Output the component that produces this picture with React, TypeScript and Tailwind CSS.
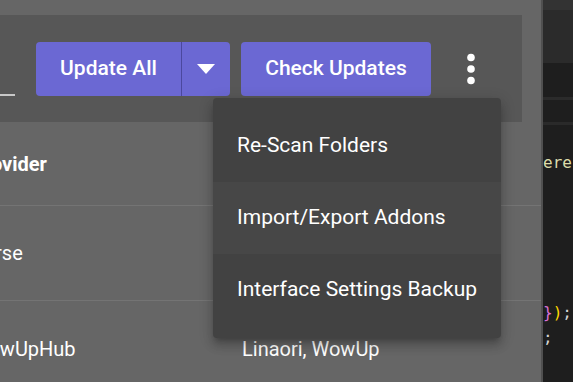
import React from "react";

const FONT = { fontFamily: "Roboto, 'Noto Sans', sans-serif" };

const ROWS = [
  { name: "Provider", author: "", head: true },
  { name: "Curse", author: "", head: false },
  { name: "WowUpHub", author: "Linaori, WowUp", head: false },
];

const MENU = ["Re-Scan Folders", "Import/Export Addons", "Interface Settings Backup"];

function MoreVert() {
  return (
    <svg width="10" height="32" viewBox="0 0 10 32" aria-hidden>
      <circle cx="5" cy="4.5" r="3.8" fill="#fff" />
      <circle cx="5" cy="16" r="3.8" fill="#fff" />
      <circle cx="5" cy="27.5" r="3.8" fill="#fff" />
    </svg>
  );
}

function CodePane() {
  const lines: React.ReactNode[] = [
    <span className="text-[#dcdcaa]">ere</span>,
    "",
    "",
    "",
    "",
    "",
    <>
      <span className="text-[#da70d6]">{"}"}</span>
      <span className="text-[#ffd700]">{")"}</span>
      <span className="text-[#d4d4d4]">;</span>
    </>,
    <span className="text-[#d4d4d4]">;</span>,
  ];
  return (
    <div className="flex-1 bg-[#1e1e1e] border-l-2 border-[#505050] flex flex-col overflow-hidden">
      <div className="h-[10px] bg-[#333333]" />
      <div className="h-[53px] bg-[#2b2b2b]" />
      <div className="h-[34px]" />
      <div className="h-[3px] bg-[#2b2b2b]" />
      <div className="h-[22px]" />
      <div className="h-[3px] bg-[#2a2a2a]" />
      <div
        className="pt-[25px] text-[16px] leading-[25px] whitespace-pre"
        style={{ fontFamily: "'DejaVu Sans Mono', monospace" }}
      >
        {lines.map((l, i) => (
          <div key={i} className="h-[25px]">
            {l}
          </div>
        ))}
      </div>
    </div>
  );
}

export default function App() {
  return (
    <div className="w-[573px] h-[382px] flex overflow-hidden bg-[#666666] text-white" style={FONT}>
      <div className="w-[541px] shrink-0 relative pt-[15px]">
        {/* toolbar */}
        <div className="w-[522px] h-[107px] bg-[#575757] flex items-center">
          <div className="w-[15px] h-[54px] border-b-2 border-[#c8c8c8]" />
          <div className="ml-[21px] flex h-[54px] rounded-[4px] bg-[#6b68d3] overflow-hidden">
            <button className="w-[145px] text-[21px] font-medium">Update All</button>
            <div className="w-px bg-[#4b489e]" />
            <button className="w-[48px] flex items-center justify-center">
              <svg width="18" height="10" viewBox="0 0 18 10" aria-hidden>
                <path d="M0 0h18L9 10z" fill="#fff" />
              </svg>
            </button>
          </div>
          <button className="ml-[11px] w-[190px] h-[54px] rounded-[4px] bg-[#6b68d3] text-[21px] font-medium">
            Check Updates
          </button>
          <button className="ml-[35px] w-[10px] flex items-center justify-center">
            <MoreVert />
          </button>
        </div>

        {/* table */}
        <div className="-ml-[29px] text-[20px]">
          {ROWS.map((r, i) => (
            <div
              key={r.name}
              className={`grid grid-cols-[271px_1fr] items-center ${
                i === 0 ? "h-[84px]" : "h-[95px]"
              } ${i < ROWS.length - 1 ? "border-b border-[#747474]" : ""}`}
            >
              <span className={r.head ? "font-bold" : ""}>{r.name}</span>
              <span>{r.author}</span>
            </div>
          ))}
        </div>

        {/* menu */}
        <div className="absolute left-[213px] top-[98px] w-[288px] rounded-[4px] bg-[#424242] py-3 shadow-[0_5px_5px_-3px_rgba(0,0,0,0.2),0_8px_10px_1px_rgba(0,0,0,0.14),0_3px_14px_2px_rgba(0,0,0,0.12)]">
          {MENU.map((m, i) => (
            <div
              key={m}
              className={`h-[72px] flex items-center pl-[24px] text-[21px] ${
                i === 1 ? "bg-[#474747]" : ""
              }`}
            >
              {m}
            </div>
          ))}
        </div>
      </div>
      <CodePane />
    </div>
  );
}
